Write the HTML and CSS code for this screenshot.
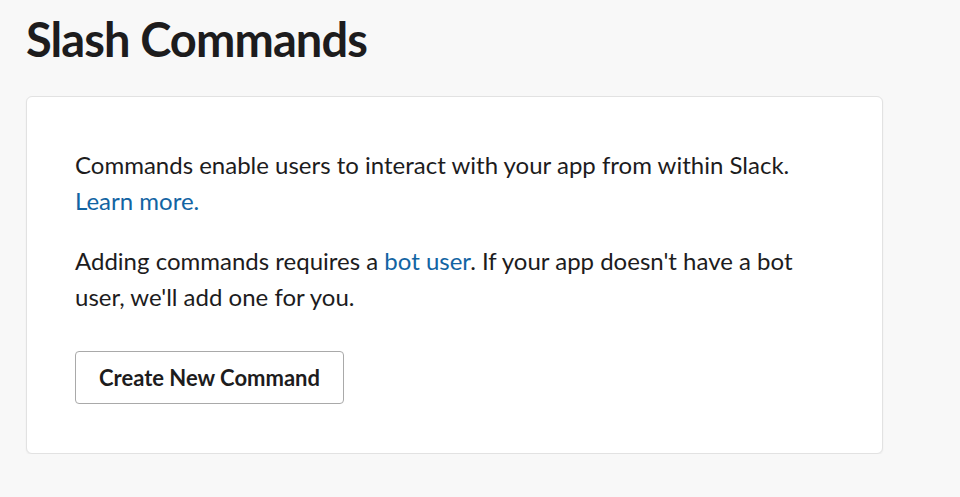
FILE: index.html
```html
<!DOCTYPE html>
<html>
<head>
<meta charset="utf-8">
<link rel="stylesheet" href="styles.css">
</head>
<body>
<main class="page">
  <h1 class="title">Slash Commands</h1>
  <section class="card">
    <p class="text">Commands enable users to interact with your app from within Slack. <a class="link" href="#">Learn more.</a></p>
    <p class="text">Adding commands requires a <a class="link" href="#">bot user</a>. If your app doesn't have a bot user, we'll add one for you.</p>
    <div class="actions">
      <button class="btn">Create New Command</button>
    </div>
  </section>
</main>
</body>
</html>
```
FILE: styles.css
```css
html, body {
  margin: 0;
  padding: 0;
  background: #f8f8f8;
}
body {
  font-family: Lato, "Noto Sans", sans-serif;
  color: #1d1c1d;
}
.page {
  padding: 10px 77px 0 26px;
}
.title {
  margin: 0 0 28px 0;
  font-size: 47px;
  font-weight: 700;
  line-height: 58px;
  letter-spacing: -0.9px;
}
.card {
  background: #fff;
  border: 1px solid #e2e2e2;
  border-radius: 6px;
  box-shadow: 0 1px 2px rgba(0,0,0,0.06);
  padding: 50px 48px 49px 48px;
}
.text {
  margin: 0 0 24px 0;
  font-size: 24px;
  line-height: 36px;
}
.link {
  color: #1264a3;
  text-decoration: none;
}
.actions {
  display: flex;
  padding-top: 12px;
}
.btn {
  font-family: Lato, "Noto Sans", sans-serif;
  font-size: 22px;
  font-weight: 700;
  color: #1d1c1d;
  background: #fff;
  border: 1px solid #a9a9a9;
  border-radius: 4px;
  height: 53px;
  padding: 0 23px;
}
```
